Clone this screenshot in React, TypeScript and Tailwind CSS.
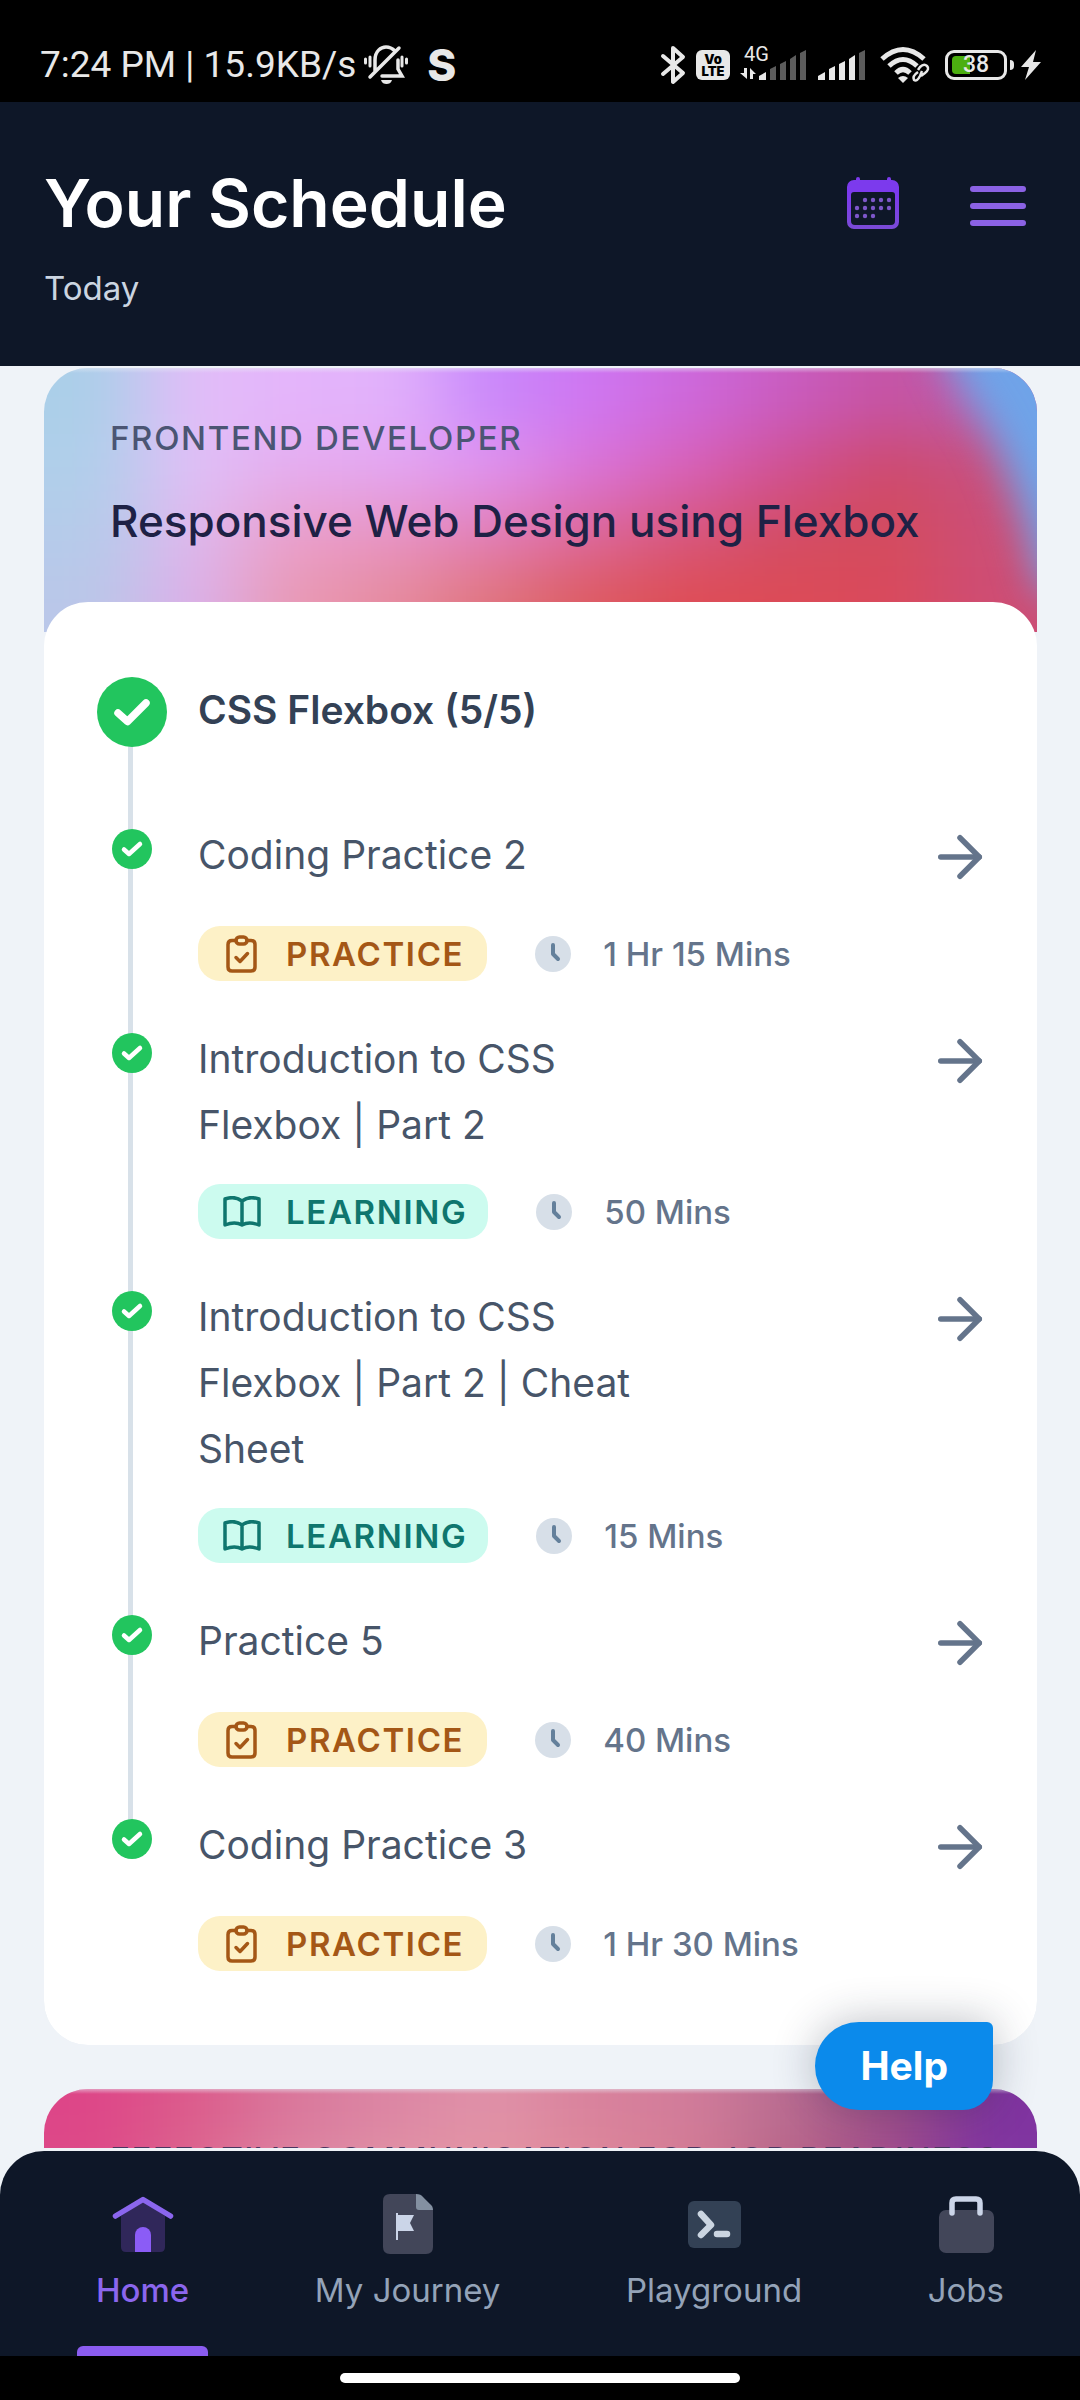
import { ArrowRight } from "lucide-react";

type Kind = "PRACTICE" | "LEARNING";

const lessons: { title: string; kind: Kind; time: string }[] = [
  { title: "Coding Practice 2", kind: "PRACTICE", time: "1 Hr 15 Mins" },
  { title: "Introduction to CSS Flexbox | Part 2", kind: "LEARNING", time: "50 Mins" },
  { title: "Introduction to CSS Flexbox | Part 2 | Cheat Sheet", kind: "LEARNING", time: "15 Mins" },
  { title: "Practice 5", kind: "PRACTICE", time: "40 Mins" },
  { title: "Coding Practice 3", kind: "PRACTICE", time: "1 Hr 30 Mins" },
];

const auroraMesh = [
  ["#abcfe9", "#e2bdf8", "#e4b4fb", "#e2b2fb", "#c888fb", "#cf76f2", "#cd68dc", "#c95cc0", "#c653a4", "#b860b0"],
  ["#b0cfea", "#e0c0f7", "#e5adf0", "#e4a6f2", "#e094f0", "#da74d8", "#d861b8", "#d05090", "#ce4a6c", "#c85080"],
  ["#b5cbea", "#dfb8ee", "#ea9fcb", "#e794c4", "#e27eb8", "#dc689c", "#d6567c", "#d24c64", "#d44b5c", "#cc4e78"],
  ["#bac7e9", "#dcb0ea", "#e999b4", "#e68b9e", "#e0747c", "#dc5a60", "#de4c54", "#dc4b56", "#da4a5c", "#ce4d74"],
];

const sunsetMesh = [
  ["#dd4688", "#dc5c8c", "#d9789c", "#dc86a4", "#e092a8", "#d9829c", "#d27c9a", "#b86c90", "#a4508c", "#8034a0"],
  ["#dd4c88", "#dd6e90", "#e08fa6", "#e59ba6", "#e797a0", "#e38d98", "#d67c90", "#b86080", "#a04c88", "#8036a0"],
  ["#dd4c88", "#dd6e90", "#e59ba6", "#e79fa4", "#e797a0", "#e38d98", "#d67c90", "#b86080", "#a04c88", "#8036a0"],
  ["#dd4c88", "#dd6e90", "#e59ba6", "#e79fa4", "#e797a0", "#e38d98", "#d67c90", "#b86080", "#a04c88", "#8036a0"],
];

/** Soft colour mesh behind a card heading, with an optional glow down its right edge. */
function Mesh({ id, colors, glow }: { id: string; colors: string[][]; glow?: string }) {
  const last = colors[0].length - 1;
  return (
    <svg className="absolute inset-0 h-full w-full" viewBox="0 0 1000 264" preserveAspectRatio="none" aria-hidden="true">
      <defs>
        <filter id={id} x="-20%" y="-60%" width="140%" height="220%" colorInterpolationFilters="sRGB">
          <feGaussianBlur stdDeviation="40 30" />
        </filter>
        <filter id={`${id}-glow`} x="-60%" y="-60%" width="220%" height="220%" colorInterpolationFilters="sRGB">
          <feGaussianBlur stdDeviation="20" />
        </filter>
        <linearGradient id={`${id}-edge`} x1="0" y1="0" x2="0" y2="1">
          <stop offset="0" stopColor="#e8edf5" stopOpacity="0.5" />
          <stop offset="1" stopColor="#e8edf5" stopOpacity="0" />
        </linearGradient>
      </defs>
      <g filter={`url(#${id})`}>
        {colors.map((row, r) =>
          row.map((fill, c) => (
            <rect
              key={`${r}-${c}`}
              x={c === 0 ? -140 : c * 100}
              y={r === 0 ? -120 : r * 66}
              width={c === 0 || c === last ? 241 : 101}
              height={r === 0 || r === 3 ? 187 : 67}
              fill={fill}
            />
          )),
        )}
      </g>
      {glow && (
        <path d="M890-60Q912 10 950 60Q988 140 1004 225H1120V-60Z" fill={glow} filter={`url(#${id}-glow)`} />
      )}
      <rect width="1000" height="5" fill={`url(#${id}-edge)`} />
    </svg>
  );
}

function StatusBar() {
  return (
    <div className="flex h-[102px] shrink-0 items-center justify-between bg-black pr-[39px] pl-10 pt-7 text-[#e8e8e8]">
      <div className="flex items-center">
        <span className="font-[Roboto] text-[37px] leading-[44px]">7:24 PM | 15.9KB/s</span>
        <svg className="ml-2 h-[44px] w-[44px]" viewBox="0 0 44 44" fill="none" stroke="currentColor" strokeWidth="3.500" strokeLinecap="round" aria-label="Ringer off">
          <path d="M11 28V17C11 8 17 4 22 4C26 4 29 6 31 8M34 17V26L38 33H18M6 34L35 5" />
          <path d="M1.500 16V20M6 14V23M42.500 16V20M38 14V23" strokeWidth="3" />
          <path d="M17 37H28C27 40 25 41 22.500 41S18 40 17 37Z" fill="currentColor" stroke="none" />
        </svg>
        <span className="ml-[19px] text-[44px] leading-[44px] font-extrabold">S</span>
      </div>
      <div className="flex items-center">
        <svg className="h-[40px] w-[26px]" viewBox="0 0 26 40" fill="none" stroke="currentColor" strokeWidth="4" strokeLinecap="round" strokeLinejoin="round" aria-label="Bluetooth">
          <path d="M3 11L23 28L13 37V3L23 12L3 29" />
        </svg>
        <span className="ml-[10px] flex h-[30px] w-[34px] flex-col items-center justify-center rounded-md bg-[#e8e8e8] text-[13px] leading-[12px] font-black text-black">
          <span>Vo</span>
          <span>LTE</span>
        </span>
        <div className="relative ml-[10px] h-[36px] w-[66px]">
          <span className="absolute top-[-3px] left-1 font-[Roboto] text-[20px] leading-[20px]">4G</span>
          <svg className="h-[36px] w-[66px]" viewBox="0 0 66 36" fill="currentColor" aria-label="Mobile signal, first SIM">
            <path d="M4 21H7V32L0 26H4ZM10 32V21L16 27H13V32Z" />
            <path d="M19 33V29L26 25V33Z" />
            <path d="M30 33V22L36 19V33ZM40 33V17L46 14V33ZM50 33V12L56 8V33ZM60 33V6L66 3V33Z" fill="#5c5c5c" />
          </svg>
        </div>
        <svg className="ml-3 h-[36px] w-[48px]" viewBox="0 0 48 36" fill="currentColor" aria-label="Mobile signal, second SIM">
          <path d="M0 33V29L7 25V33ZM11 33V22L17 19V33ZM21 33V17L27 14V33ZM31 33V12L37 8V33Z" />
          <path d="M41 33V6L47 3V33Z" fill="#5c5c5c" />
        </svg>
        <svg className="ml-[14px] h-[40px] w-[50px]" viewBox="0 0 50 40" fill="none" stroke="currentColor" aria-label="Wi-Fi">
          <path d="M2 14Q23-5 44 14M9 21Q23 8 37 21M16 28Q23 21 30 28" strokeWidth="5" />
          <path d="M18 33Q23 29 28 33L23 38Z" fill="currentColor" stroke="none" />
          <path d="M41 31L45 27Q49 23 47 21Q44 19 41 23L39 25M43 27L39 32Q36 37 34 34Q33 31 37 28" stroke="#000" strokeWidth="6" />
          <path d="M41 31L45 28Q50 24 47 21Q44 18 40 22L38 25M42 26L40 31Q37 37 34 35Q32 31 38 27" strokeWidth="2.500" />
        </svg>
        <div className="relative ml-[15px] flex h-[30px] w-[62px] items-center justify-center rounded-[9px] border-[3px] border-[#e8e8e8]">
          <span className="absolute inset-y-[3px] left-[4px] w-[18px] rounded-l-[4px] bg-[#4caf10]" />
          <span className="relative font-[Roboto] text-[23px] leading-6 font-medium">38</span>
        </div>
        <span className="ml-[3px] h-[10px] w-[4px] rounded-r bg-[#e8e8e8]" />
        <svg className="ml-[7px] h-[30px] w-[20px]" viewBox="0 0 20 30" fill="currentColor" aria-label="Charging">
          <path d="M15 0L0 17H8L4 30L20 12H12Z" />
        </svg>
      </div>
    </div>
  );
}

function CalendarIcon() {
  const dots = [
    [19, 24], [27, 24], [35, 24], [43, 24],
    [11, 32], [19, 32], [27, 32], [35, 32], [43, 32],
    [11, 40], [19, 40], [27, 40],
  ];
  return (
    <svg className="h-[54px] w-[54px]" viewBox="0 0 54 54" aria-hidden="true">
      <defs>
        <linearGradient id="calendar-frame" x1="0" y1="0" x2="0" y2="1">
          <stop offset="0.3" stopColor="#7c3aed" />
          <stop offset="1" stopColor="#7a4bd6" />
        </linearGradient>
      </defs>
      <path d="M8 4H46A7 7 0 0 1 53 11V46A7 7 0 0 1 46 53H8A7 7 0 0 1 1 46V11A7 7 0 0 1 8 4ZM8 16Q5 16 5 19V45Q5 49 9 49H45Q49 49 49 45V19Q49 16 46 16Z" fill="url(#calendar-frame)" fillRule="evenodd" />
      <path d="M12 3V7M43 3V7" stroke="#7c3aed" strokeWidth="4" strokeLinecap="round" />
      {dots.map(([x, y]) => (
        <circle key={`${x}-${y}`} cx={x} cy={y} r="2.200" fill="#7d57c9" />
      ))}
    </svg>
  );
}

function Header() {
  return (
    <header className="flex shrink-0 items-start justify-between bg-[#0e1728] pt-[61px] pr-[54px] pb-14 pl-11">
      <div>
        <h1 className="text-[66px] leading-[80px] font-semibold text-white">Your Schedule</h1>
        <p className="mt-[23px] text-[33px] leading-[44px] text-[#cbd5e1]">Today</p>
      </div>
      <div className="flex items-center gap-[70px] pt-[13px]">
        <button type="button" aria-label="Calendar">
          <CalendarIcon />
        </button>
        <button type="button" aria-label="Menu" className="flex w-[56px] flex-col gap-[11px] pt-[5px]">
          <span className="h-[6px] w-full rounded-full bg-[#8b62e4]" />
          <span className="h-[6px] w-full rounded-full bg-[#8b62e4]" />
          <span className="h-[6px] w-full rounded-full bg-[#8b62e4]" />
        </button>
      </div>
    </header>
  );
}

function CheckCircle({ large = false }: { large?: boolean }) {
  return large ? (
    <svg className="h-[70px] w-[70px]" viewBox="0 0 70 70" aria-label="Completed">
      <circle cx="35" cy="35" r="35" fill="#22c55e" />
      <path d="M21 36L30.500 44.500L49 26" fill="none" stroke="#fff" strokeWidth="7.500" strokeLinecap="round" strokeLinejoin="round" />
    </svg>
  ) : (
    <svg className="relative h-10 w-10" viewBox="0 0 40 40" aria-label="Completed">
      <circle cx="20" cy="20" r="20" fill="#22c55e" />
      <path d="M12 20.500L17 25L28 15" fill="none" stroke="#fff" strokeWidth="4.500" strokeLinecap="round" strokeLinejoin="round" />
    </svg>
  );
}

function PracticeIcon() {
  return (
    <svg className="h-[38px] w-[31px]" viewBox="0 0 31 38" fill="none" stroke="currentColor" strokeWidth="3.500" strokeLinecap="round" strokeLinejoin="round" aria-hidden="true">
      <path d="M10 5.500H6Q2 5.500 2 9.500V32Q2 36 6 36H25Q29 36 29 32V9.500Q29 5.500 25 5.500H21" />
      <rect x="10" y="2" width="11" height="7" rx="3.500" />
      <path d="M10 22.500L14 26.500L21.500 18.500" />
    </svg>
  );
}

function LearningIcon() {
  return (
    <svg className="h-[32px] w-[38px]" viewBox="0 0 38 32" fill="none" stroke="currentColor" strokeWidth="3.500" strokeLinejoin="round" strokeLinecap="round" aria-hidden="true">
      <path d="M19 5Q12-.5 2 3V29Q12 25 19 29Q26 25 36 29V3Q26-.5 19 5V29" />
    </svg>
  );
}

function Badge({ kind }: { kind: Kind }) {
  return kind === "PRACTICE" ? (
    <span className="flex h-[55px] items-center gap-[29px] rounded-[22px] bg-[#fdf1c7] pr-[23px] pl-[28px] text-[33px] leading-[40px] font-semibold tracking-wider text-[#a45716]">
      <PracticeIcon />
      PRACTICE
    </span>
  ) : (
    <span className="flex h-[55px] items-center gap-[25px] rounded-[22px] bg-[#ccfbef] pr-[21px] pl-[25px] text-[33px] leading-[40px] font-semibold tracking-wider text-[#0f766e]">
      <LearningIcon />
      LEARNING
    </span>
  );
}

function ScheduleCard() {
  return (
    <article className="relative overflow-hidden rounded-[44px] bg-[#eff3f8]">
      <div className="relative h-[264px]">
        <Mesh id="aurora" colors={auroraMesh} glow="#6fa3e8" />
        <div className="relative px-[66px] pt-[50px]">
          <p className="text-[33px] leading-[40px] font-medium tracking-wider text-[#4b5573]">FRONTEND DEVELOPER</p>
          <h2 className="mt-[30px] text-[44px] leading-[66px] font-medium text-[#1e2145]">Responsive Web Design using Flexbox</h2>
        </div>
      </div>
      <div className="relative -mt-[30px] rounded-[44px] bg-white pt-[75px] pr-12 pb-[29px] pl-[53px]">
        <div className="relative z-10 flex items-start gap-[31px]">
          <CheckCircle large />
          <h3 className="text-[39px] leading-[66px] font-semibold text-[#334155]">CSS Flexbox (5/5)</h3>
        </div>
        <ol className="pt-[75px]">
          {lessons.map((lesson, i) => (
            <li key={lesson.title} className="relative flex">
              <span
                className={
                  i === 0
                    ? "absolute -top-[85px] bottom-0 left-[31px] w-[5px] bg-[#d8e1e9]"
                    : i < lessons.length - 1
                      ? "absolute top-0 left-[31px] h-full w-[5px] bg-[#d8e1e9]"
                      : "absolute top-0 left-[31px] h-[20px] w-[5px] bg-[#d8e1e9]"
                }
              />
              <div className="w-[101px] shrink-0 pt-[7px] pl-[15px]">
                <CheckCircle />
              </div>
              <div className="min-w-0 flex-1 pb-[45px]">
                <div className="flex min-h-[78px] items-start justify-between">
                  <h4 className="w-[460px] text-[39px] leading-[66px] text-[#475569]">{lesson.title}</h4>
                  <button type="button" aria-label={`Open ${lesson.title}`} className="-mr-1 pt-[2px] text-[#64748b]">
                    <ArrowRight size={66} />
                  </button>
                </div>
                <div className="mt-[26px] flex items-center">
                  <Badge kind={lesson.kind} />
                  <svg className="ml-12 h-9 w-9" viewBox="0 0 36 36" aria-hidden="true">
                    <circle cx="18" cy="18" r="18" fill="#d7dfe8" />
                    <path d="M18 9V18L23 23" fill="none" stroke="#64809b" strokeWidth="4" strokeLinecap="round" strokeLinejoin="round" />
                  </svg>
                  <span className="ml-8 text-[33px] leading-[44px] font-medium text-[#64748b]">{lesson.time}</span>
                </div>
              </div>
            </li>
          ))}
        </ol>
      </div>
    </article>
  );
}

function HomeIcon() {
  return (
    <svg className="h-[66px] w-[66px]" viewBox="0 0 66 66" fill="none" aria-hidden="true">
      <path d="M11 25L33 10L55 25V56Q55 61 50 61H16Q11 61 11 56Z" fill="#30275a" />
      <path d="M5.500 25L33 8.500L60.500 25" stroke="#8b66ee" strokeWidth="5.500" strokeLinecap="round" strokeLinejoin="round" />
      <path d="M25 61V44A8 8 0 0 1 41 44V61Z" fill="#8b5cf6" />
    </svg>
  );
}

function JourneyIcon() {
  return (
    <svg className="h-[66px] w-[66px]" viewBox="0 0 66 66" aria-hidden="true">
      <path d="M15 3H41L58 19V56Q58 63 51 63H15Q8 63 8 56V10Q8 3 15 3Z" fill="#424659" />
      <path d="M41 3Q46 3 48 6L55 13Q58 15 58 19H44Q41 19 41 16Z" fill="#8390a1" />
      <path d="M21 22H23V24H39L35 32L39 40H23V49H21Z" fill="#cbd5e8" />
    </svg>
  );
}

function PlaygroundIcon() {
  return (
    <svg className="h-[66px] w-[66px]" viewBox="0 0 66 66" fill="none" aria-hidden="true">
      <rect x="7" y="10" width="53" height="47" rx="6" fill="#334155" />
      <path d="M20 23L30 34L20 44M36 43H46" stroke="#cbd5e1" strokeWidth="6.500" strokeLinecap="round" strokeLinejoin="round" />
    </svg>
  );
}

function JobsIcon() {
  return (
    <svg className="h-[66px] w-[66px]" viewBox="0 0 66 66" fill="none" aria-hidden="true">
      <rect x="6" y="19" width="55" height="43" rx="7" fill="#424659" />
      <path d="M19 22V12Q19 8 23 8H43Q47 8 47 12V22" stroke="#cbd5e8" strokeWidth="5.500" strokeLinecap="round" />
    </svg>
  );
}

const tabs = [
  { label: "Home", icon: <HomeIcon />, active: true },
  { label: "My Journey", icon: <JourneyIcon />, active: false },
  { label: "Playground", icon: <PlaygroundIcon />, active: false },
  { label: "Jobs", icon: <JobsIcon />, active: false },
];

function BottomNav() {
  return (
    <nav className="shrink-0 rounded-t-[44px] bg-[#0e1728] pr-[37px] pl-[57px]">
      <ul className="flex justify-between">
        {tabs.map((tab) => (
          <li key={tab.label} className="px-5">
            <a
              href="#"
              aria-current={tab.active ? "page" : undefined}
              className={
                tab.active
                  ? "relative flex h-[205px] flex-col items-center px-[19px] pt-10 font-medium text-[#8b66ee]"
                  : "relative flex h-[205px] flex-col items-center px-[19px] pt-10 text-[#94a3b8]"
              }
            >
              {tab.icon}
              <span className="mt-[11px] text-[33px] leading-[44px]">{tab.label}</span>
              {tab.active && <span className="absolute inset-x-0 bottom-0 h-[10px] rounded-t-[6px] bg-[#8b5cf0]" />}
            </a>
          </li>
        ))}
      </ul>
    </nav>
  );
}

export default function App() {
  return (
    <div className="flex h-screen flex-col bg-[#eff3f8] font-[Inter,sans-serif]">
      <StatusBar />
      <Header />
      <div className="relative flex min-h-0 flex-1 flex-col">
        <main className="min-h-0 flex-1 overflow-hidden pt-[2px] pr-[43px] pl-11">
          <ScheduleCard />
          <article className="relative mt-11 h-[264px] overflow-hidden rounded-t-[44px]">
            <Mesh id="sunset" colors={sunsetMesh} />
            <p className="relative px-[66px] pt-[50px] text-[33px] leading-[40px] font-medium tracking-wider whitespace-nowrap text-[#4b3560]">
              EFFECTIVE COMMUNICATION FOR JOB READINESS
            </p>
          </article>
        </main>
        <button
          type="button"
          className="absolute right-[87px] bottom-[38px] h-[88px] rounded-[44px] rounded-tr-[6px] rounded-br-[30px] bg-[#0b8aeb] px-[45px] text-[39px] leading-[48px] font-bold text-white shadow-[0_0_44px_rgba(30,40,60,0.3)]"
        >
          Help
        </button>
      </div>
      <div className="h-[3px] shrink-0" />
      <BottomNav />
      <div className="flex h-11 shrink-0 items-center justify-center bg-black">
        <span className="h-[10px] w-[37%] rounded-full bg-white" />
      </div>
    </div>
  );
}
